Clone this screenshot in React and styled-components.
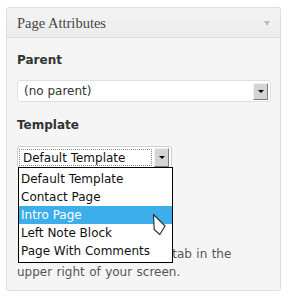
import React from "react";
import styled, { createGlobalStyle } from "styled-components";

const GlobalStyle = createGlobalStyle`
  body {
    margin: 0;
    background: #ffffff;
    font-family: "DejaVu Sans", "Liberation Sans", sans-serif;
  }
`;

const Page = styled.div`
  padding: 7px 0 0 6px;
`;

const Panel = styled.div`
  width: 275px;
  box-sizing: border-box;
  border: 1px solid #dfdfdf;
  border-radius: 3px;
  background: #f5f5f5;
`;

const Header = styled.div`
  height: 28px;
  border-bottom: 1px solid #dfdfdf;
  background: linear-gradient(#f4f4f4, #ececec);
  border-radius: 3px 3px 0 0;
  display: flex;
  align-items: center;
  justify-content: space-between;
  padding: 1px 10px 0;
`;

const Title = styled.h3`
  margin: 0;
  font-family: "Liberation Serif", "DejaVu Serif", serif;
  font-weight: normal;
  font-size: 14.5px;
  color: #464646;
`;

const Body = styled.div`
  padding: 14px 9px 9px 10px;
`;

const Label = styled.p`
  margin: ${(p) => p.$top || 0}px 0 0;
  font-size: 12px;
  line-height: 16px;
  font-weight: bold;
  color: #333;
`;

const SelectBox = styled.div`
  position: relative;
  margin-top: ${(p) => p.$top}px;
  width: ${(p) => p.$width || "100%"};
  height: 22px;
  box-sizing: border-box;
  border: 1px solid ${(p) => (p.$focus ? "#cfcfcf" : "#dfdfdf")};
  border-radius: 3px;
  background: #fff;
  display: flex;
  align-items: center;
  padding: 0 2px 0 ${(p) => (p.$focus ? 1 : 6)}px;
  font-size: 12px;
  color: #333;
`;

const Value = styled.span`
  flex: 1;
  white-space: nowrap;
`;

const FocusValue = styled.span`
  flex: 1;
  height: 17px;
  line-height: 16px;
  box-sizing: border-box;
  border: 1px dotted #888;
  padding-left: 3px;
  margin-right: 2px;
  color: #111;
  white-space: nowrap;
`;

const ArrowButton = styled.span`
  width: 15px;
  height: ${(p) => p.$h}px;
  box-sizing: border-box;
  background: #d4d4d4;
  border-top: 1px solid #f2f2f2;
  border-left: 1px solid #f2f2f2;
  border-right: 1px solid #7a7a7a;
  border-bottom: 1px solid #7a7a7a;
  display: flex;
  align-items: center;
  justify-content: center;
  &::after {
    content: "";
    border-left: 3px solid transparent;
    border-right: 3px solid transparent;
    border-top: 3px solid #000;
  }
`;

const Collapse = styled.span`
  border-left: 3px solid transparent;
  border-right: 3px solid transparent;
  border-top: 5px solid #bcbcbc;
`;

const List = styled.ul`
  position: absolute;
  z-index: 2;
  top: 100%;
  left: 0;
  width: 155px;
  box-sizing: border-box;
  margin: 0;
  padding: 2px 0;
  list-style: none;
  background: #fff;
  border: 1px solid #000;
`;

const Option = styled.li`
  height: 18px;
  line-height: 18px;
  padding-left: 2px;
  font-size: 12px;
  white-space: nowrap;
  color: ${(p) => (p.$active ? "#fff" : "#111")};
  background: ${(p) => (p.$active ? "#3daee9" : "transparent")};
`;

const Pointer = styled.svg`
  position: absolute;
  left: 133px;
  top: 45px;
`;

const Help = styled.p`
  margin: 77px 3px 0 0;
  font-size: 12px;
  line-height: 18px;
  word-spacing: 0.6px;
  color: #555;
`;

const templates = [
  "Default Template",
  "Contact Page",
  "Intro Page",
  "Left Note Block",
  "Page With Comments",
];

export default function App() {
  return (
    <Page>
      <GlobalStyle />
      <Panel>
        <Header>
          <Title>Page Attributes</Title>
          <Collapse />
        </Header>
        <Body>
          <Label>Parent</Label>
          <SelectBox $top={12}>
            <Value>(no parent)</Value>
            <ArrowButton $h={17} />
          </SelectBox>
          <Label $top={15}>Template</Label>
          <SelectBox $top={13} $width="155px" $focus>
            <FocusValue>Default Template</FocusValue>
            <ArrowButton $h={19} />
            <List>
              {templates.map((t) => (
                <Option key={t} $active={t === "Intro Page"}>
                  {t}
                </Option>
              ))}
              <Pointer width="15" height="23" viewBox="0 0 15 23">
                <path
                  d="M1.5 1.5 L2.2 16.5 L7.8 21.5 L13 13 Z"
                  fill="#fff"
                  stroke="#333"
                  strokeWidth="1.2"
                  strokeLinejoin="round"
                />
              </Pointer>
            </List>
          </SelectBox>
          <Help>
            Need help? Use the Help tab in the upper right of your screen.
          </Help>
        </Body>
      </Panel>
    </Page>
  );
}
